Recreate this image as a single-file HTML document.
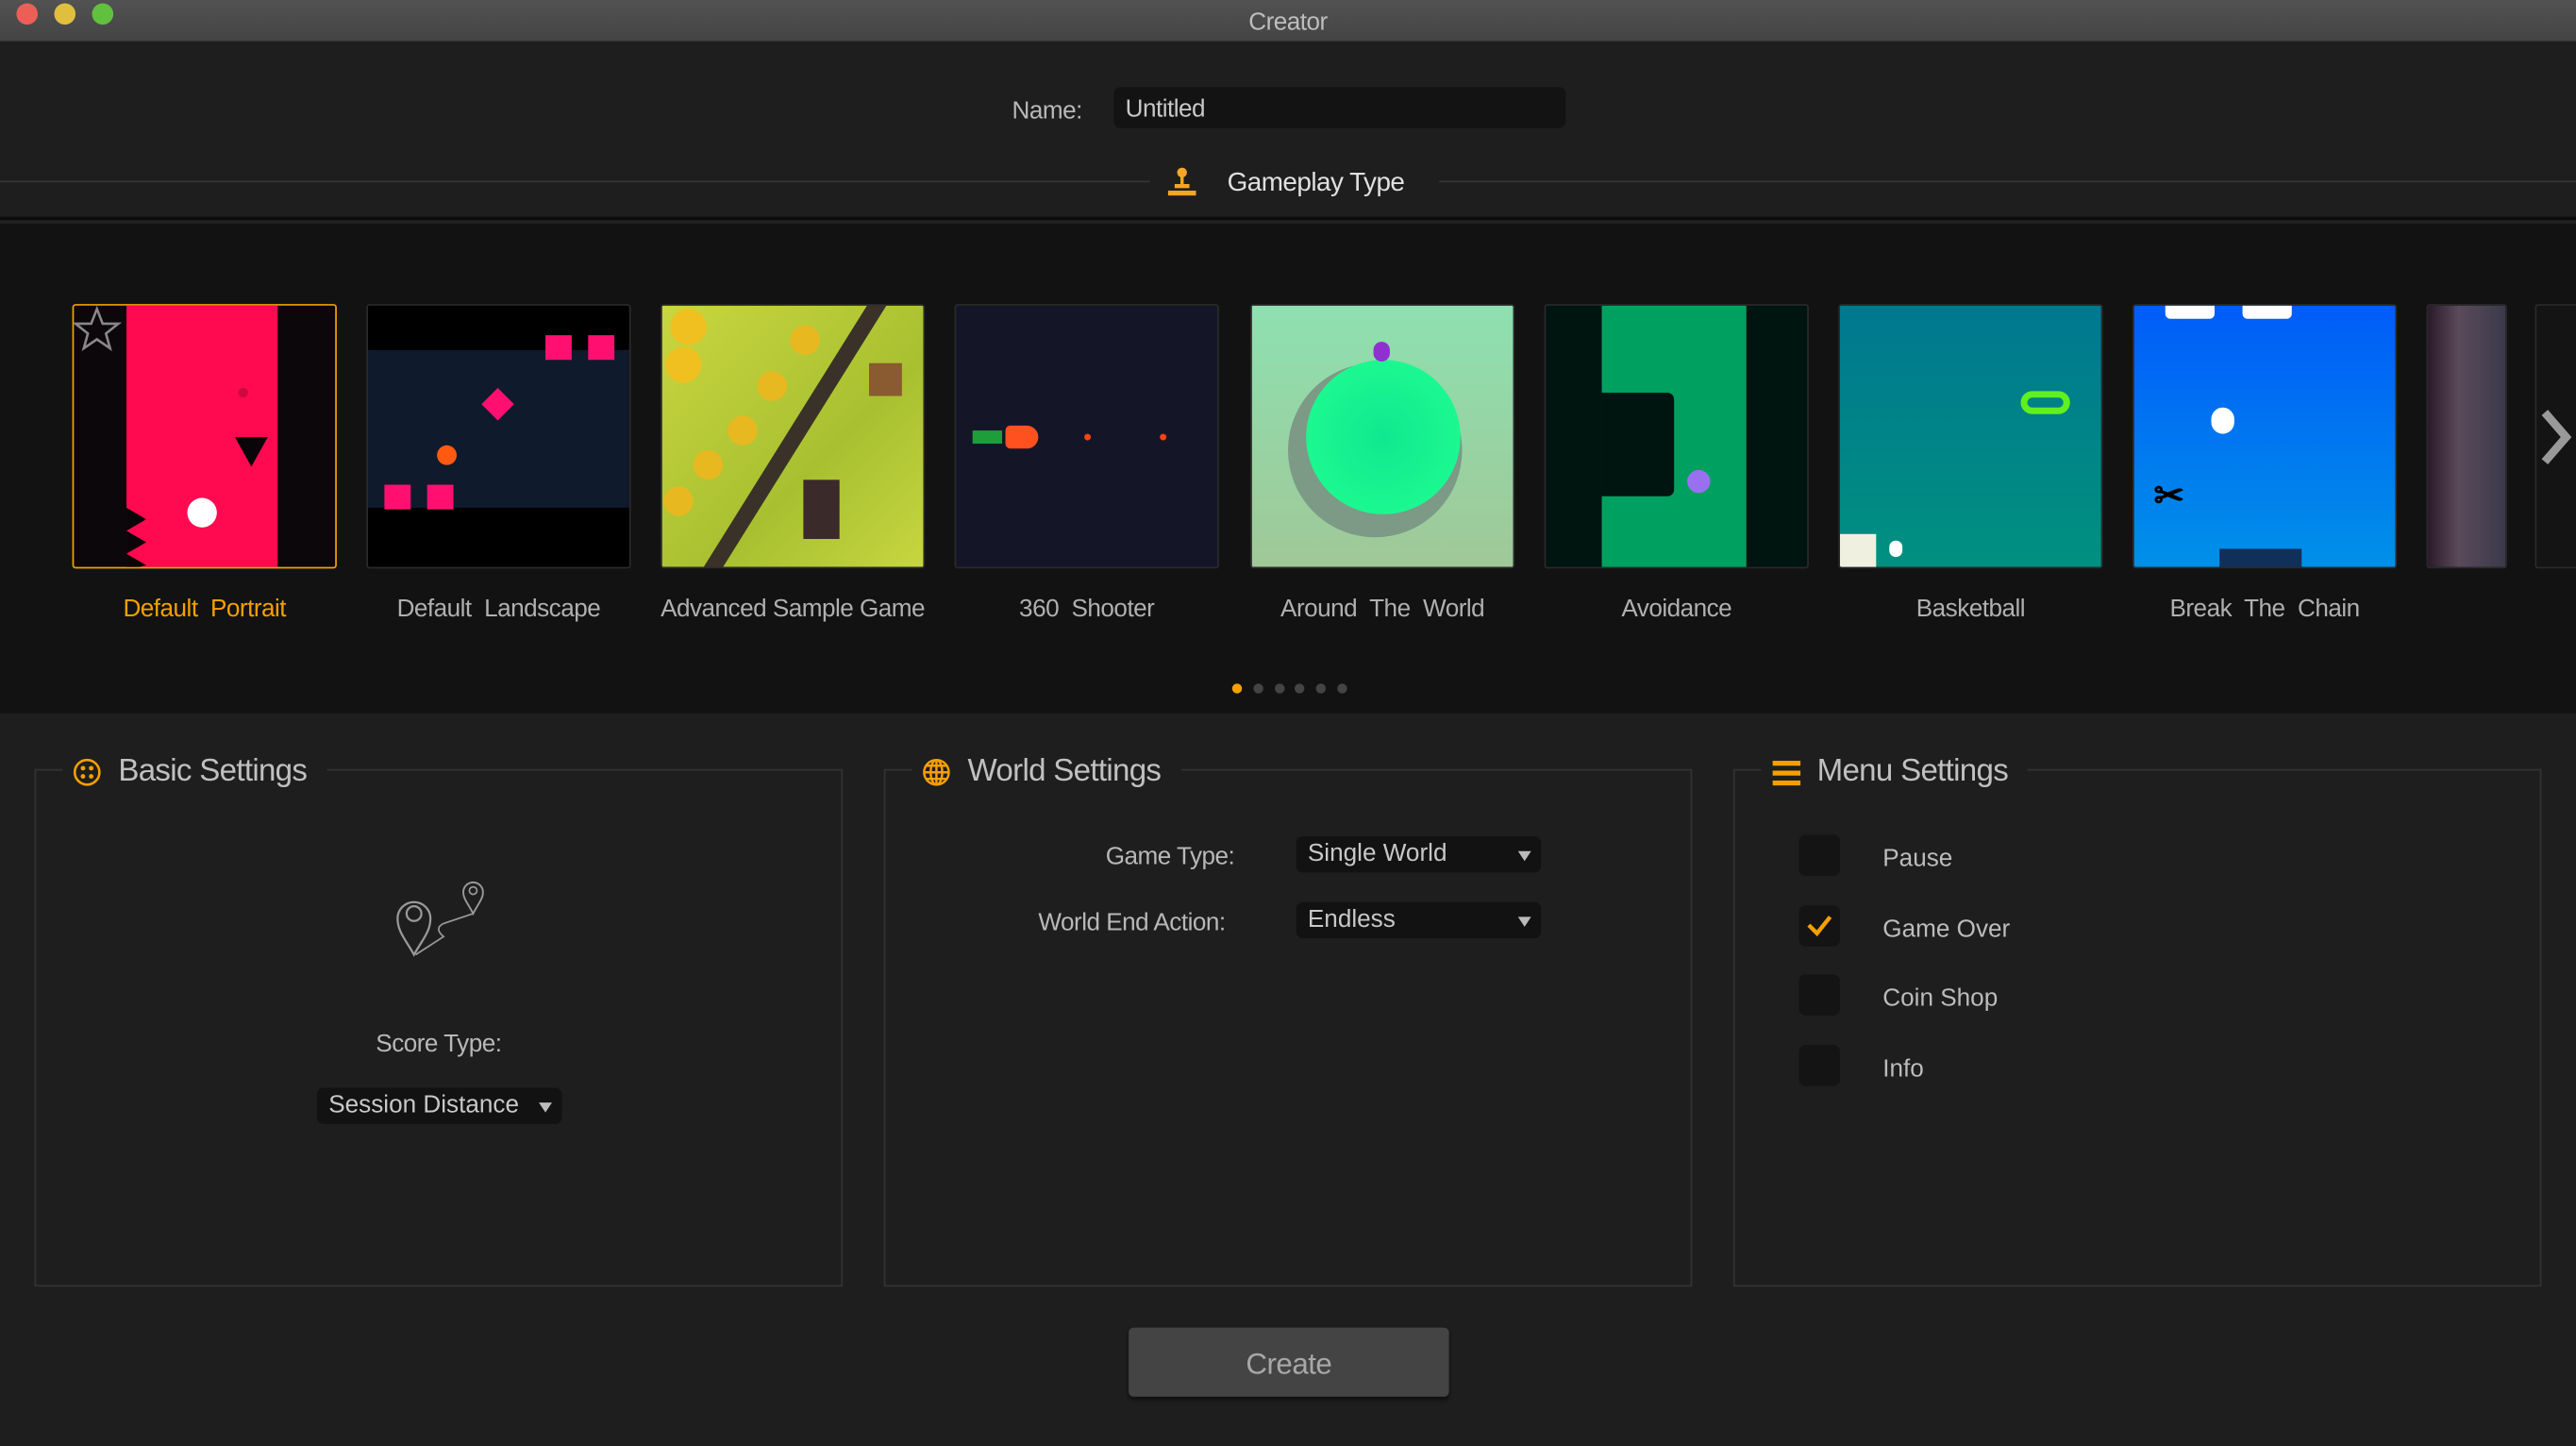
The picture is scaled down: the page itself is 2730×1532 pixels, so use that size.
<!DOCTYPE html>
<html><head><meta charset="utf-8"><style>
html,body{margin:0;padding:0;background:#1e1e1e;overflow:hidden;width:2730px;height:1532px}
#r{position:absolute;left:0;top:0;width:1568px;height:880px;transform:scale(1.74107,1.74091);transform-origin:0 0;background:#1e1e1e;font-family:"Liberation Sans",sans-serif;color:#b8b8b8}
.a{position:absolute}
.t{position:absolute;white-space:nowrap;letter-spacing:-0.3px}
.th{position:absolute;top:185px;width:161px;height:161px;overflow:hidden;border:1px solid #2a2a2a;box-sizing:border-box;border-radius:2px}
.lb{position:absolute;top:362px;width:179px;text-align:center;font-size:15px;color:#b0b0b0;letter-spacing:-0.3px}
.pn{position:absolute;top:468px;width:492px;height:315px;border:1px solid #333;box-sizing:border-box}
.pt{position:absolute;top:-10px;left:16px;background:#1e1e1e;padding:0 12px 0 6px;font-size:19px;color:#c0c0c0;display:flex;align-items:center;gap:10px;letter-spacing:-0.4px}
.dd{position:absolute;background:#121212;border-radius:4px;height:22px;font-size:15px;color:#c8c8c8;line-height:22px;padding-left:7px;box-sizing:border-box}
.dd:after{content:"";position:absolute;right:6px;top:9px;border-left:4px solid transparent;border-right:4px solid transparent;border-top:6px solid #bbb}
.cb{position:absolute;left:1095px;width:25px;height:25px;background:#141414;border-radius:4px}
.cl{position:absolute;left:1146px;font-size:15px;color:#bcbcbc}
.dot{position:absolute;top:416px;width:6px;height:6px;border-radius:3px;background:#444}
</style></head><body><div id="r">
<div class="a" style="left:0;top:0;width:1568px;height:25px;background:linear-gradient(#525252,#444)"></div>
<div class="a" style="left:10px;top:2px;width:13px;height:13px;border-radius:7px;background:#ec5f57"></div>
<div class="a" style="left:33px;top:2px;width:13px;height:13px;border-radius:7px;background:#e0bf3e"></div>
<div class="a" style="left:56px;top:2px;width:13px;height:13px;border-radius:7px;background:#62c03f"></div>
<div class="t" style="left:0;width:1568px;text-align:center;top:5px;font-size:15px;color:#bdbdbd">Creator</div>
<div class="t" style="left:616px;top:59px;font-size:15px;color:#b8b8b8">Name:</div>
<div class="a" style="left:678px;top:53px;width:275px;height:25px;background:#131313;border-radius:4px"></div>
<div class="t" style="left:685px;top:58px;font-size:15px;color:#c8c8c8">Untitled</div>
<div class="a" style="left:0;top:110px;width:700px;height:1px;background:#353535"></div>
<div class="a" style="left:876px;top:110px;width:692px;height:1px;background:#353535"></div>
<svg class="a" style="left:710px;top:101px" width="19" height="19" viewBox="0 0 19 19"><circle cx="9.5" cy="4" r="3" fill="#f5a623"/><rect x="8.5" y="5" width="2" height="6" fill="#f5a623"/><rect x="5" y="11" width="9" height="2.5" fill="#f5a623"/><rect x="1" y="15" width="17" height="3" fill="#f5a623"/></svg>
<div class="t" style="left:747px;top:103px;font-size:16px;color:#e0e0e0">Gameplay Type</div>
<div class="a" style="left:0;top:132px;width:1568px;height:302px;background:#121212;border-top:2px solid #0b0b0b;box-sizing:border-box"></div>
<div class="a" style="left:0;top:134px;width:1568px;height:2px;background:#222"></div>
<div class="th" style="left:44px;border:1.5px solid #f5a000;background:#0b070b">
 <div class="a" style="left:32px;top:0;width:92px;height:161px;background:#ff0a50"></div>
 <svg class="a" style="left:0;top:0" width="161" height="161"><polygon points="98,80 118,80 108,98" fill="#0a0508"/><polygon points="32,123 44,130 32,137 44,144 32,151 44,158 32,161" fill="#0a0508"/><circle cx="78" cy="126" r="9" fill="#fff"/><circle cx="103" cy="53" r="3" fill="#d00840"/><polygon points="14,2 17.5,11 27,11 19.5,17 22,26 14,20.5 6,26 8.5,17 1,11 10.5,11" fill="none" stroke="#888" stroke-width="1.5"/></svg>
</div>
<div class="th" style="left:223px;background:#000">
 <div class="a" style="left:0;top:27px;width:161px;height:96px;background:#0f1a2c"></div>
 <div class="a" style="left:108px;top:18px;width:16px;height:15px;background:#ff1070"></div><div class="a" style="left:134px;top:18px;width:16px;height:15px;background:#ff1070"></div>
 <div class="a" style="left:10px;top:109px;width:16px;height:15px;background:#ff1070"></div><div class="a" style="left:36px;top:109px;width:16px;height:15px;background:#ff1070"></div>
 <div class="a" style="left:72px;top:53px;width:14px;height:14px;background:#ff1070;transform:rotate(45deg)"></div>
 <div class="a" style="left:42px;top:85px;width:12px;height:12px;border-radius:6px;background:#ff5a10"></div>
</div>
<div class="th" style="left:402px;background:linear-gradient(135deg,#c9d640,#a8c030 60%,#c6d640)">
 <div class="a" style="left:-30px;top:60px;width:240px;height:10px;background:#3a3228;transform:rotate(-58deg)"></div>
 <div class="a" style="left:5px;top:2px;width:22px;height:22px;border-radius:11px;background:#f0c020"></div>
 <div class="a" style="left:2px;top:25px;width:22px;height:22px;border-radius:11px;background:#f0c020"></div>
 <div class="a" style="left:78px;top:12px;width:18px;height:18px;border-radius:9px;background:#e8b820"></div>
 <div class="a" style="left:58px;top:40px;width:18px;height:18px;border-radius:9px;background:#e8b820"></div>
 <div class="a" style="left:40px;top:67px;width:18px;height:18px;border-radius:9px;background:#e8b820"></div>
 <div class="a" style="left:19px;top:88px;width:18px;height:18px;border-radius:9px;background:#e8b820"></div>
 <div class="a" style="left:1px;top:110px;width:18px;height:18px;border-radius:9px;background:#e8b820"></div>
 <div class="a" style="left:126px;top:35px;width:20px;height:20px;background:#8a5a30"></div>
 <div class="a" style="left:86px;top:106px;width:22px;height:36px;background:#3a2a2a"></div>
</div>
<div class="th" style="left:581px;background:#141628">
 <div class="a" style="left:30px;top:73px;width:20px;height:14px;border-radius:3px 7px 7px 3px;background:#ff5020"></div>
 <div class="a" style="left:10px;top:76px;width:18px;height:8px;background:#20c040;opacity:.8"></div>
 <div class="a" style="left:78px;top:78px;width:4px;height:4px;border-radius:2px;background:#ff4010"></div>
 <div class="a" style="left:124px;top:78px;width:4px;height:4px;border-radius:2px;background:#ff4010"></div>
</div>
<div class="th" style="left:761px;background:linear-gradient(#8ee0b0,#a0c898)">
 <div class="a" style="left:22px;top:35px;width:106px;height:106px;border-radius:53px;background:#7c9a86"></div>
 <div class="a" style="left:33px;top:33px;width:94px;height:94px;border-radius:47px;background:radial-gradient(#10e890,#20ff90)"></div>
 <div class="a" style="left:74px;top:22px;width:10px;height:12px;border-radius:5px;background:#9030d0"></div>
</div>
<div class="th" style="left:940px;background:#001410">
 <div class="a" style="left:34px;top:0;width:88px;height:161px;background:#00a060"></div>
 <div class="a" style="left:34px;top:53px;width:44px;height:63px;background:#001410;border-radius:0 4px 4px 0"></div>
 <div class="a" style="left:86px;top:100px;width:14px;height:14px;border-radius:7px;background:#9a70f0"></div>
</div>
<div class="th" style="left:1119px;background:linear-gradient(#007890,#009080)">
 <div class="a" style="left:110px;top:52px;width:30px;height:14px;border-radius:8px;border:4px solid #60f020;box-sizing:border-box"></div>
 <div class="a" style="left:0;top:139px;width:22px;height:22px;background:#f0f0e0"></div>
 <div class="a" style="left:30px;top:143px;width:8px;height:10px;border-radius:5px;background:#fff"></div>
</div>
<div class="th" style="left:1298px;background:linear-gradient(#005cf8,#0090e8)">
 <div class="a" style="left:19px;top:0;width:30px;height:8px;background:#fff;border-radius:0 0 3px 3px"></div>
 <div class="a" style="left:66px;top:0;width:30px;height:8px;background:#fff;border-radius:0 0 3px 3px"></div>
 <div class="a" style="left:47px;top:62px;width:14px;height:16px;border-radius:8px;background:#fff"></div>
 <div class="t" style="left:12px;top:103px;font-size:22px;color:#000;font-weight:bold">✂</div>
 <div class="a" style="left:52px;top:148px;width:50px;height:13px;background:#10305a"></div>
</div>
<div class="th" style="left:1477px;width:49px;background:linear-gradient(90deg,#2a1a2a,#5a4a5a 40%,#3a3a4a)"></div>
<div class="th" style="left:1543px;width:30px;background:#141414"></div>
<svg class="a" style="left:1546px;top:248px" width="20" height="36"><polyline points="3,3 16,18 3,33" fill="none" stroke="#999" stroke-width="5"/></svg>
<div class="lb" style="left:35px;color:#f5a000">Default&nbsp; Portrait</div>
<div class="lb" style="left:214px">Default&nbsp; Landscape</div>
<div class="lb" style="left:393px">Advanced Sample Game</div>
<div class="lb" style="left:572px">360&nbsp; Shooter</div>
<div class="lb" style="left:752px">Around&nbsp; The&nbsp; World</div>
<div class="lb" style="left:931px">Avoidance</div>
<div class="lb" style="left:1110px">Basketball</div>
<div class="lb" style="left:1289px">Break&nbsp; The&nbsp; Chain</div>
<div class="dot" style="left:750px;background:#f5a000"></div><div class="dot" style="left:763px"></div><div class="dot" style="left:776px"></div><div class="dot" style="left:788px"></div><div class="dot" style="left:801px"></div><div class="dot" style="left:814px"></div>
<div class="pn" style="left:21px"><div class="pt"><svg width="18" height="18" viewBox="0 0 18 18"><circle cx="9" cy="9" r="7.5" fill="none" stroke="#f5a000" stroke-width="1.5"/><circle cx="6.5" cy="6.5" r="1.4" fill="#f5a000"/><circle cx="11.5" cy="6.5" r="1.4" fill="#f5a000"/><circle cx="6.5" cy="11.5" r="1.4" fill="#f5a000"/><circle cx="11.5" cy="11.5" r="1.4" fill="#f5a000"/></svg>Basic Settings</div></div>
<svg class="a" style="left:236px;top:534px" width="64" height="50" viewBox="0 0 64 50"><path d="M16 47 C11 38 6 33 6 25 A10 10 0 0 1 26 25 C26 33 21 38 16 47 Z" fill="none" stroke="#999" stroke-width="1.3"/><circle cx="16" cy="22" r="4.5" fill="none" stroke="#999" stroke-width="1.3"/><path d="M52 22 C49 16 46 13 46 9 A6 6 0 0 1 58 9 C58 13 55 16 52 22 Z" fill="none" stroke="#999" stroke-width="1.1"/><circle cx="52" cy="8" r="2.3" fill="none" stroke="#999" stroke-width="1"/><path d="M17 47 L34 36 Q28 31 34 28 L52 22" fill="none" stroke="#999" stroke-width="1"/></svg>
<div class="t" style="left:0;width:534px;text-align:center;top:627px;font-size:15px;color:#b8b8b8">Score Type:</div>
<div class="dd" style="left:193px;top:662px;width:149px">Session Distance</div>
<div class="pn" style="left:538px"><div class="pt"><svg width="18" height="18" viewBox="0 0 18 18" fill="none" stroke="#f5a000" stroke-width="1.4"><circle cx="9" cy="9" r="7.5"/><ellipse cx="9" cy="9" rx="3.5" ry="7.5"/><line x1="1.5" y1="9" x2="16.5" y2="9"/><line x1="9" y1="1.5" x2="9" y2="16.5"/><line x1="3" y1="5" x2="15" y2="5"/><line x1="3" y1="13" x2="15" y2="13"/></svg>World Settings</div></div>
<div class="t" style="left:673px;top:513px;font-size:15px;color:#b8b8b8">Game Type:</div>
<div class="t" style="left:632px;top:553px;font-size:15px;color:#b8b8b8">World End Action:</div>
<div class="dd" style="left:789px;top:509px;width:149px">Single World</div>
<div class="dd" style="left:789px;top:549px;width:149px">Endless</div>
<div class="pn" style="left:1055px"><div class="pt"><svg width="18" height="18" viewBox="0 0 18 18"><rect x="1" y="2" width="17" height="3" fill="#f5a000"/><rect x="1" y="8" width="17" height="3" fill="#f5a000"/><rect x="1" y="14" width="17" height="3" fill="#f5a000"/></svg>Menu Settings</div></div>
<div class="cb" style="top:508px"></div><div class="cl" style="top:514px">Pause</div>
<div class="cb" style="top:551px"></div><div class="cl" style="top:557px">Game Over</div>
<svg class="a" style="left:1099px;top:556px" width="17" height="15"><polyline points="2,7 7,12 15,2" fill="none" stroke="#f5a000" stroke-width="2.5"/></svg>
<div class="cb" style="top:593px"></div><div class="cl" style="top:599px">Coin Shop</div>
<div class="cb" style="top:636px"></div><div class="cl" style="top:642px">Info</div>
<div class="a" style="left:687px;top:808px;width:195px;height:42px;background:#444;border-radius:3px;box-shadow:0 2px 2px #111"></div>
<div class="t" style="left:687px;width:195px;text-align:center;top:820px;font-size:18px;color:#a8a8a8">Create</div>
</div></body></html>
